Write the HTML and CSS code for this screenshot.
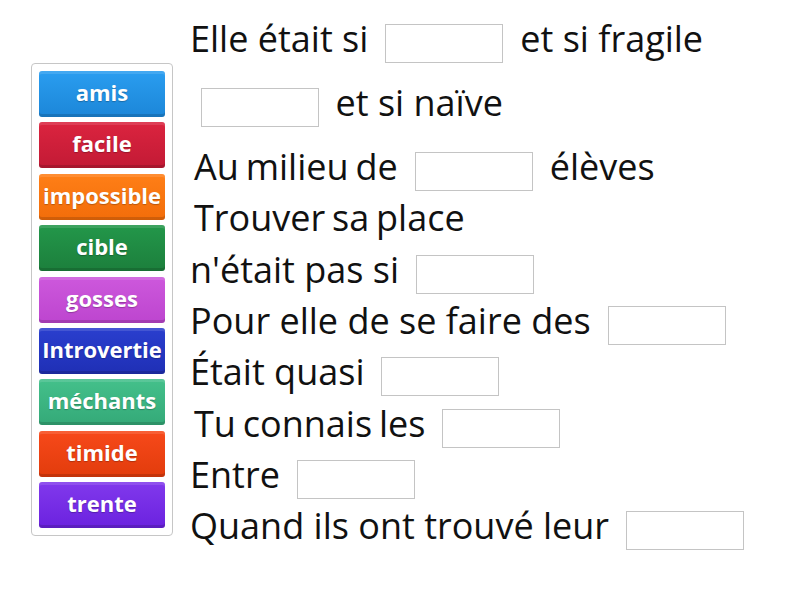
FILE: index.html
```html
<!DOCTYPE html>
<html lang="fr">
<head>
    <meta charset="UTF-8">
    <meta name="viewport" content="width=device-width, initial-scale=1.0">
    <title>Texte à trous</title>
    <link rel="stylesheet" href="styles.css">
</head>
<body>
    <div class="page">
        <div class="bank">
            <div class="tile blue">amis</div>
            <div class="tile red">facile</div>
            <div class="tile orange">impossible</div>
            <div class="tile green">cible</div>
            <div class="tile pink">gosses</div>
            <div class="tile navy">Introvertie</div>
            <div class="tile teal">méchants</div>
            <div class="tile vermilion">timide</div>
            <div class="tile purple">trente</div>
        </div>

        <div class="text">
            <div class="row wide">
                <span>Elle était si</span><span class="blank"></span><span>et si fragile</span>
            </div>
            <div class="row wide indent">
                <span class="blank first"></span><span>et si naïve</span>
            </div>
            <div class="row tight">
                <span>Au milieu de</span><span class="blank"></span><span>élèves</span>
            </div>
            <div class="row tight">
                <span>Trouver sa place</span>
            </div>
            <div class="row">
                <span>n'était pas si</span><span class="blank"></span>
            </div>
            <div class="row">
                <span>Pour elle de se faire des</span><span class="blank"></span>
            </div>
            <div class="row">
                <span>Était quasi</span><span class="blank"></span>
            </div>
            <div class="row tight">
                <span>Tu connais les</span><span class="blank"></span>
            </div>
            <div class="row">
                <span>Entre</span><span class="blank"></span>
            </div>
            <div class="row">
                <span>Quand ils ont trouvé leur</span><span class="blank"></span>
            </div>
        </div>
    </div>
</body>
</html>
```

FILE: styles.css
```css
body {
    margin: 0;
    padding: 0;
    background-color: #ffffff;
    font-family: "Open Sans", "DejaVu Sans", sans-serif;
    color: #111111;
}
.page {
    display: flex;
    align-items: flex-start;
}

/* word bank */
.bank {
    margin: 63px 0 0 31px;
    padding: 7px;
    width: 126px;
    border: 1px solid #c6c6c6;
    border-radius: 4px;
    display: flex;
    flex-direction: column;
    gap: 5.4px;
}
.tile {
    height: 46px;
    box-sizing: border-box;
    padding-bottom: 4px;
    border-radius: 3px;
    display: flex;
    align-items: center;
    justify-content: center;
    color: #ffffff;
    font-size: 22px;
    font-weight: bold;
    white-space: nowrap;
    text-shadow: 0 1px 1px rgba(0, 0, 0, 0.25);
    box-shadow: inset 0 -3px 0 rgba(0, 0, 0, 0.14), inset 0 3px 0 rgba(255, 255, 255, 0.12);
}
.blue { background: linear-gradient(#2a9df0, #1c86d8); }
.red { background: linear-gradient(#db243f, #c21a35); }
.orange { background: linear-gradient(#ff7f17, #f26d0a); }
.green { background: linear-gradient(#23974a, #1c7f3c); }
.pink { background: linear-gradient(#cd58dc, #bd45cf); }
.navy { background: linear-gradient(#2a3fce, #1f2fb5); }
.teal { background: linear-gradient(#44c08b, #34a978); }
.vermilion { background: linear-gradient(#f7491a, #e23c0c); }
.purple { background: linear-gradient(#8139ec, #6b22df); }

/* sentences */
.text {
    margin-left: 17px;
    padding-top: 14.5px;
    display: flex;
    flex-direction: column;
    gap: 3.3px;
}
.row {
    display: flex;
    align-items: flex-start;
    height: 48px;
    line-height: 48px;
    font-size: 36px;
    white-space: nowrap;
}
.row.wide {
    margin-bottom: 13px;
}
.row.indent {
    padding-left: 10.5px;
}
.row.tight {
    padding-left: 4px;
    word-spacing: -2.5px;
}
.blank {
    display: block;
    width: 118px;
    height: 39px;
    box-sizing: border-box;
    margin: 9px 17px 0 17px;
    background-color: #ffffff;
    border: 1px solid #c4c4c4;
}
.blank.first {
    margin-left: 0;
}
```
